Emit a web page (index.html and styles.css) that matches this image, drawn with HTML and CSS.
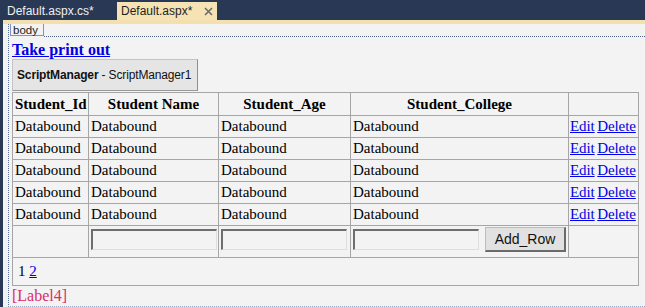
FILE: index.html
```html
<!DOCTYPE html>
<html>
<head>
<meta charset="utf-8">
<title>Default.aspx</title>
<link rel="stylesheet" href="styles.css">
</head>
<body>
<div class="tabbar">
  <div class="tab">Default.aspx.cs*</div>
  <div class="tab active">
    <span>Default.aspx*</span>
    <svg class="close" width="9" height="9" viewBox="0 0 9 9"><path d="M1 1L8 8M8 1L1 8" stroke="#6d6d6d" stroke-width="1.6" fill="none"/></svg>
  </div>
</div>
<div class="strip"></div>
<div class="designer">
  <div class="frame">
    <div class="tagrow"><span class="tag">body</span><span class="tagline"></span></div>
    <div class="content">
      <a class="print" href="#">Take print out</a>
      <div class="sm"><b>ScriptManager</b> - ScriptManager1</div>
      <table class="grid">
        <colgroup>
          <col class="c1"><col class="c2"><col class="c3"><col class="c4"><col class="c5">
        </colgroup>
        <tr class="head">
          <th>Student_Id</th><th>Student Name</th><th>Student_Age</th><th>Student_College</th><th></th>
        </tr>
        <tr class="row"><td>Databound</td><td>Databound</td><td>Databound</td><td>Databound</td><td class="acts"><a href="#">Edit</a> <a href="#">Delete</a></td></tr>
        <tr class="row"><td>Databound</td><td>Databound</td><td>Databound</td><td>Databound</td><td class="acts"><a href="#">Edit</a> <a href="#">Delete</a></td></tr>
        <tr class="row"><td>Databound</td><td>Databound</td><td>Databound</td><td>Databound</td><td class="acts"><a href="#">Edit</a> <a href="#">Delete</a></td></tr>
        <tr class="row"><td>Databound</td><td>Databound</td><td>Databound</td><td>Databound</td><td class="acts"><a href="#">Edit</a> <a href="#">Delete</a></td></tr>
        <tr class="row"><td>Databound</td><td>Databound</td><td>Databound</td><td>Databound</td><td class="acts"><a href="#">Edit</a> <a href="#">Delete</a></td></tr>
        <tr class="foot">
          <td></td>
          <td><input class="box" type="text"></td>
          <td><input class="box" type="text"></td>
          <td><div class="addcell"><input class="box" type="text"><button class="btn" type="button">Add_Row</button></div></td>
          <td></td>
        </tr>
        <tr class="pager"><td colspan="5">1 <a href="#">2</a></td></tr>
      </table>
      <div class="label">[Label4]</div>
    </div>
  </div>
</div>
</body>
</html>
```
FILE: styles.css
```css
html, body {
  margin: 0;
  padding: 0;
}
body {
  width: 645px;
  height: 307px;
  overflow: hidden;
  background: #293955;
  font-family: "Liberation Serif", "Times New Roman", serif;
}
.tabbar {
  height: 20px;
  display: flex;
  align-items: flex-end;
  font-family: "Liberation Sans", Arial, sans-serif;
  font-size: 12px;
}
.tab {
  height: 18px;
  line-height: 18px;
  width: 110px;
  padding-left: 7px;
  color: #f0f0f0;
}
.tab.active {
  width: 92px;
  padding: 0 4px 0 4px;
  background: #f5e3b4;
  color: #1e1e1e;
  display: flex;
  align-items: center;
  justify-content: space-between;
}
.close {
  display: block;
}
.strip {
  height: 4px;
  margin-left: 3px;
  background: #f3e0ae;
}
.designer {
  margin-left: 3px;
  height: 283px;
  background: #f3f3f3;
}
.frame {
  margin-left: 5px;
  border-left: 1px dotted #5c6f96;
  border-bottom: 1px dotted #9aa6bf;
}
.tagrow {
  display: flex;
  height: 13px;
}
.tag {
  margin-left: 1px;
  box-sizing: border-box;
  width: 34px;
  height: 12px;
  border: 1px solid #8193bb;
  border-top: none;
  padding: 1px 0 0 2px;
  font-family: "Liberation Sans", Arial, sans-serif;
  font-size: 11.5px;
  line-height: 11px;
  color: #222;
  white-space: nowrap;
}
.tagline {
  flex: 1;
  border-bottom: 1px dotted #4e628c;
}
.content {
  padding: 3px 0 0 3px;
}
a {
  color: #0000e6;
}
.print {
  display: block;
  width: max-content;
  font-weight: bold;
  font-size: 16px;
  line-height: 19px;
  height: 19px;
}
.sm {
  box-sizing: border-box;
  width: 186px;
  height: 32px;
  background: #e5e5e5;
  border: 1px solid #c4c4c4;
  border-right-color: #8e8e8e;
  border-bottom-color: #9a9a9a;
  padding-left: 4px;
  line-height: 30px;
  font-family: "Liberation Sans", Arial, sans-serif;
  font-size: 12px;
  letter-spacing: -0.15px;
  color: #111;
  white-space: nowrap;
}
.grid {
  margin-top: 1px;
  border-collapse: collapse;
  table-layout: fixed;
  width: 627px;
  font-size: 15px;
}
.c1 { width: 76px; }
.c2 { width: 130px; }
.c3 { width: 132px; }
.c4 { width: 218px; }
.c5 { width: 70px; }
.grid th, .grid td {
  border: 1px solid #a6a6a6;
  padding: 0 2px;
  white-space: nowrap;
  overflow: hidden;
  text-align: left;
}
.grid th {
  text-align: center;
  font-weight: bold;
}
.grid th:first-child {
  text-align: left;
}
.grid td.acts {
  padding: 0 0 0 1px;
  word-spacing: -1px;
  letter-spacing: -0.1px;
}
.head { height: 23px; }
.row { height: 22px; }
.foot { height: 32px; }
.foot td {
  vertical-align: top;
  padding-top: 1px;
}
.pager { height: 28px; }
.pager td {
  padding-left: 5px;
}
.box {
  display: block;
  box-sizing: border-box;
  width: 126px;
  height: 21px;
  margin: 2px 0 0 0;
  padding: 0;
  background: #f3f3f3;
  border: 2px solid #6e6e6e;
  border-right: 1px solid #dedede;
  border-bottom: 1px solid #dedede;
}
.addcell {
  display: flex;
  align-items: flex-start;
}
.btn {
  box-sizing: border-box;
  margin-left: 6px;
  width: 83px;
  height: 25px;
  padding: 0;
  background: #e1e1e1;
  border: 1px solid #bdbdbd;
  border-right: 2px solid #6a6a6a;
  border-bottom: 2px solid #6a6a6a;
  font-family: "Liberation Sans", Arial, sans-serif;
  font-size: 14px;
  color: #111;
}
.label {
  color: #da2c6c;
  font-size: 16px;
  line-height: 18px;
  padding-top: 1px;
  height: 19px;
}
```
